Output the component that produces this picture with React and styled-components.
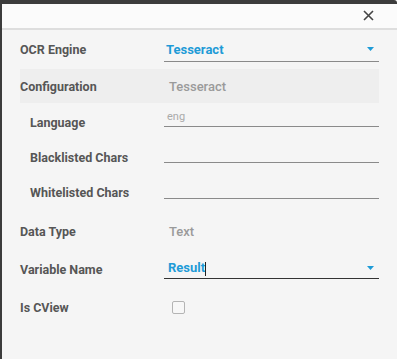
import styled, { createGlobalStyle } from 'styled-components';

const GlobalStyle = createGlobalStyle`
  html, body {
    margin: 0;
    padding: 0;
    background: #ffffff;
  }
  body {
    font-family: Roboto, "Liberation Sans", sans-serif;
  }
`;

const Frame = styled.div`
  width: 397px;
  height: 359px;
  box-sizing: border-box;
  border-top: 4px solid #3c3c3c;
  border-left: 2px solid #3c3c3c;
  border-top-right-radius: 3px;
  display: flex;
  flex-direction: column;
`;

const Header = styled.div`
  height: 24px;
  background: #fbfbfb;
  border-bottom: 2px solid #dedede;
  display: flex;
  align-items: center;
  justify-content: flex-end;
  padding-right: 22px;
`;

const CloseButton = styled.button`
  border: none;
  background: none;
  padding: 0;
  width: 12px;
  height: 12px;
  display: flex;
  cursor: pointer;
`;

const Body = styled.div`
  flex: 1;
  background: #f5f5f5;
  padding: 0 18px;
`;

const Row = styled.div`
  display: grid;
  grid-template-columns: ${(p) => (p.$indent ? '134px' : '144px')} 1fr;
  align-items: center;
  height: ${(p) => p.$h || 36}px;
  padding-left: ${(p) => (p.$indent ? '10px' : '0')};
  background: ${(p) => (p.$shade ? '#eeeeee' : 'transparent')};
`;

const Label = styled.div`
  font-size: 12.5px;
  font-weight: 700;
  color: #565656;
`;

const Field = styled.div`
  position: relative;
  height: ${(p) => p.$fh || 24}px;
  display: flex;
  align-items: center;
  box-sizing: border-box;
  padding-left: ${(p) => p.$pl || 2}px;
  border-bottom: ${(p) => (p.$line ? `1px solid ${p.$line}` : 'none')};
`;

const TextInput = styled(Field)`
  align-self: start;
  height: 16px;
  margin-top: ${(p) => p.$mt || 7}px;
  align-items: flex-start;
`;

const Value = styled.span`
  font-size: ${(p) => p.$size || 13}px;
  font-weight: ${(p) => p.$weight || 500};
  color: ${(p) => p.$color};
  line-height: 1;
`;

const Caret = styled.svg`
  position: absolute;
  right: 5px;
  top: ${(p) => p.$top || 9}px;
`;

const Cursor = styled.span`
  display: inline-block;
  width: 1px;
  height: 14px;
  background: #222;
  vertical-align: middle;
`;

const Checkbox = styled.div`
  width: 11px;
  height: 11px;
  border: 1px solid #b4b4b4;
  border-radius: 2px;
  margin-left: 6px;
  background: #f7f7f7;
`;

function DownCaret({ top }) {
  return (
    <Caret $top={top} width="7" height="4" viewBox="0 0 7 4">
      <path d="M0 0 L7 0 L3.5 4 Z" fill="#1e9bd7" />
    </Caret>
  );
}

export default function App() {
  return (
    <>
      <GlobalStyle />
      <Frame>
        <Header>
          <CloseButton aria-label="close">
            <svg width="11" height="11" viewBox="0 0 11 11">
              <path d="M1 1 L10 10 M10 1 L1 10" stroke="#444" strokeWidth="1.6" />
            </svg>
          </CloseButton>
        </Header>
        <Body>
          <Row $h={39}>
            <Label>OCR Engine</Label>
            <Field $line="#8a8a8a">
              <Value $color="#1e9bd7" $weight={700}>Tesseract</Value>
              <DownCaret top={9} />
            </Field>
          </Row>
          <Row $shade $h={34}>
            <Label>Configuration</Label>
            <Field $pl={5}>
              <Value $color="#9a9a9a">Tesseract</Value>
            </Field>
          </Row>
          <Row $indent $h={35} style={{ marginTop: 2 }}>
            <Label>Language</Label>
            <TextInput $line="#8a8a8a" $pl={3} $mt={6}>
              <Value $color="#aaaaaa" $size={11} $weight={400}>eng</Value>
            </TextInput>
          </Row>
          <Row $indent $h={35}>
            <Label>Blacklisted Chars</Label>
            <TextInput $line="#8a8a8a" $mt={7} />
          </Row>
          <Row $indent $h={35}>
            <Label>Whitelisted Chars</Label>
            <TextInput $line="#8a8a8a" $mt={8} />
          </Row>
          <Row $h={42}>
            <Label>Data Type</Label>
            <Field $pl={5}>
              <Value $color="#9a9a9a">Text</Value>
            </Field>
          </Row>
          <Row $h={34}>
            <Label>Variable Name</Label>
            <Field $line="#333333" $pl={4} $fh={19}>
              <Value $color="#1e9bd7" $weight={700}>
                Result
                <Cursor />
              </Value>
              <DownCaret top={6} />
            </Field>
          </Row>
          <Row $h={42}>
            <Label>Is CView</Label>
            <Field>
              <Checkbox />
            </Field>
          </Row>
        </Body>
      </Frame>
    </>
  );
}
